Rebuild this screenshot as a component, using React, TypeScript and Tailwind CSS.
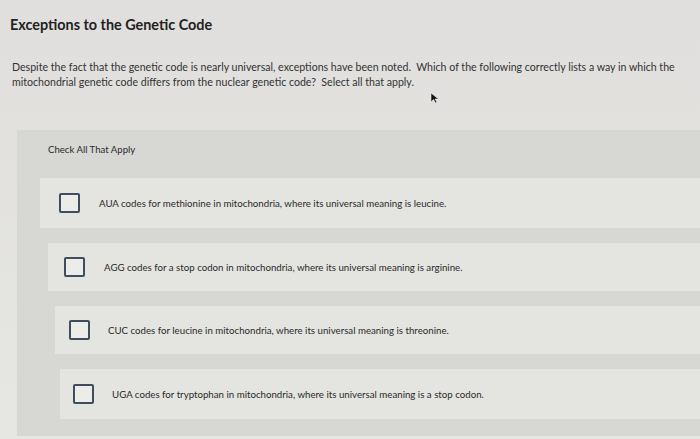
import React from "react";

const options = [
  { text: "AUA codes for methionine in mitochondria, where its universal meaning is leucine.", ml: "ml-[23px]", pl: "pl-[19px]", gap: "gap-[19px]", h: "h-[50px]", mt: "mt-[22px]" },
  { text: "AGG codes for a stop codon in mitochondria, where its universal meaning is arginine.", ml: "ml-[31px]", pl: "pl-[16px]", gap: "gap-[19px]", h: "h-[48px]", mt: "mt-[15px]" },
  { text: "CUC codes for leucine in mitochondria, where its universal meaning is threonine.", ml: "ml-[38px]", pl: "pl-[14px]", gap: "gap-[18px]", h: "h-[48px]", mt: "mt-[15px]" },
  { text: "UGA codes for tryptophan in mitochondria, where its universal meaning is a stop codon.", ml: "ml-[43px]", pl: "pl-[13px]", gap: "gap-[18px]", h: "h-[50px]", mt: "mt-[15px]" },
];

export default function App() {
  return (
    <div
      className="w-[700px] h-[439px] overflow-hidden bg-gradient-to-b from-[#e0dfdd] to-[#e6e6e2] text-[#2c2c2c] relative"
      style={{ fontFamily: "Lato, 'Open Sans', sans-serif" }}
    >
      <div className="pl-[10px] pt-[16px]">
        <h1 className="text-[14.4px] font-bold leading-[18px] text-[#222]">Exceptions to the Genetic Code</h1>
      </div>
      <div className="pl-[12px] pr-[4px] mt-[26px] text-[10.6px] leading-[15px] text-[#333]">
        <p className="whitespace-nowrap">
          Despite the fact that the genetic code is nearly universal, exceptions have been noted.&nbsp; Which of the following correctly lists a way in which the
        </p>
        <p>mitochondrial genetic code differs from the nuclear genetic code?&nbsp; Select all that apply.</p>
      </div>
      <svg className="absolute left-[430px] top-[92px]" width="10" height="12" viewBox="0 0 10 12">
        <path d="M1 1 L1 10 L3.5 7.5 L5.5 11 L7 10.3 L5 7 L8.5 7 Z" fill="#111" stroke="#eee" strokeWidth="0.6" />
      </svg>
      <div className="ml-[17px] mt-[40px] h-[306px] bg-[#d7d7d4] pt-[14px]">
        <div className="pl-[31px] text-[9.6px] leading-[12px] text-[#2b2b2b]">Check All That Apply</div>
        {options.map((o, i) => (
          <div
            key={i}
            className={`${o.ml} ${o.mt} ${o.h} ${o.pl} ${o.gap} bg-[#e4e4e0] flex items-center`}
          >
            <div className="w-[21px] h-[20px] shrink-0 rounded-[2px] border-[2px] border-[#3f4d5c] bg-[#ecece9]" />
            <span className="text-[9.7px] text-[#2a2a2a] whitespace-nowrap">{o.text}</span>
          </div>
        ))}
      </div>
    </div>
  );
}
